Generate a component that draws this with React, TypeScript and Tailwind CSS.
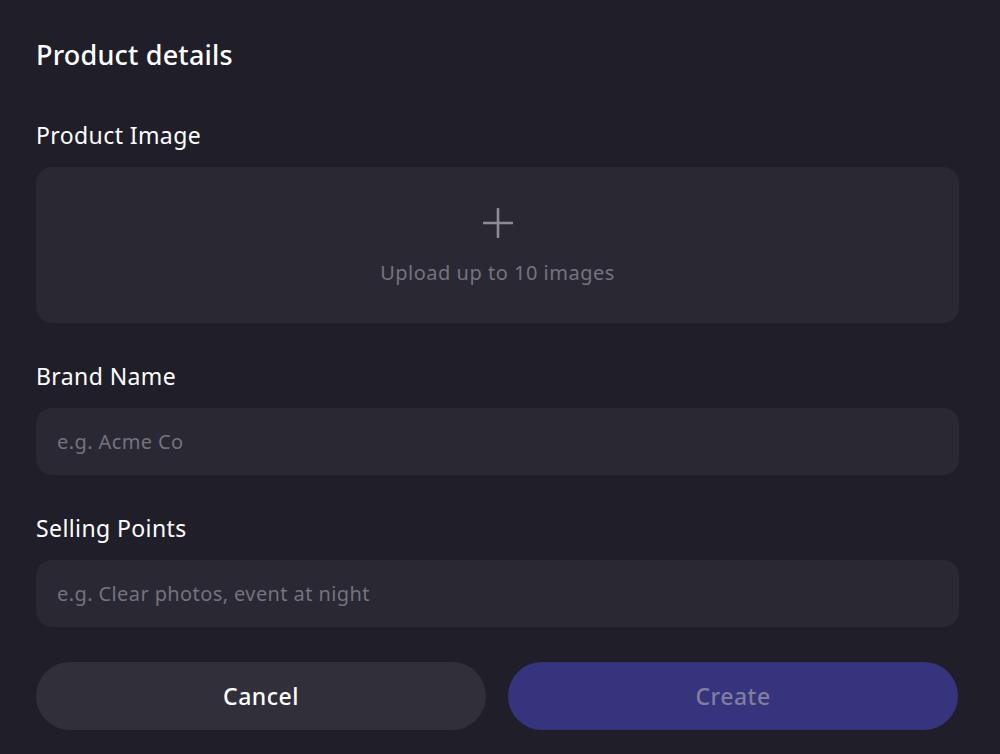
export default function App() {
  return (
    <main
      className="min-h-[754px] bg-[#201f29] text-white pl-9 pr-[41px] pt-[37px]"
      style={{ fontFamily: '"Noto Sans", "Open Sans", sans-serif' }}
    >
      {/* Title */}
      <h1 className="text-[27px] leading-[36px] font-medium tracking-[0.2px] text-white">Product details</h1>

      {/* Product Image */}
      <div className="mt-[47px]">
        <p className="text-[23px] leading-[30px] tracking-[0.4px] text-white">Product Image</p>
        <button className="mt-[17px] w-full h-[156px] pt-[4px] rounded-2xl bg-[#2a2833] flex flex-col items-center justify-center">
          <svg width="30" height="30" viewBox="0 0 30 30" className="text-[#8d8b96]">
            <path d="M1 15h28M15 1v28" stroke="currentColor" strokeWidth="2.6" strokeLinecap="round" fill="none" />
          </svg>
          <span className="mt-[21px] text-[20px] leading-[28px] tracking-[0.5px] text-[#75737e]">Upload up to 10 images</span>
        </button>
      </div>

      {/* Brand Name */}
      <div className="mt-[38px]">
        <p className="text-[23px] leading-[30px] tracking-[0.4px] text-white">Brand Name</p>
        <div className="mt-[17px] h-[67px] rounded-2xl bg-[#2a2833] flex items-center px-[21px]">
          <span className="text-[20px] tracking-[0.4px] text-[#75737e]">e.g. Acme Co</span>
        </div>
      </div>

      {/* Selling Points */}
      <div className="mt-[38px]">
        <p className="text-[23px] leading-[30px] tracking-[0.4px] text-white">Selling Points</p>
        <div className="mt-[17px] h-[67px] rounded-2xl bg-[#2a2833] flex items-center px-[21px]">
          <span className="text-[20px] tracking-[0.4px] text-[#75737e]">e.g. Clear photos, event at night</span>
        </div>
      </div>

      {/* Actions */}
      <div className="mt-[35px] grid grid-cols-2 gap-[22px] pr-px">
        <button className="h-[68px] rounded-full bg-[#312f3a] text-white text-[23px] font-medium tracking-[0.5px]">
          Cancel
        </button>
        <button className="h-[68px] rounded-full bg-[#35347c] text-[#807e9f] text-[23px] font-medium tracking-[0.5px]">
          Create
        </button>
      </div>
    </main>
  );
}
